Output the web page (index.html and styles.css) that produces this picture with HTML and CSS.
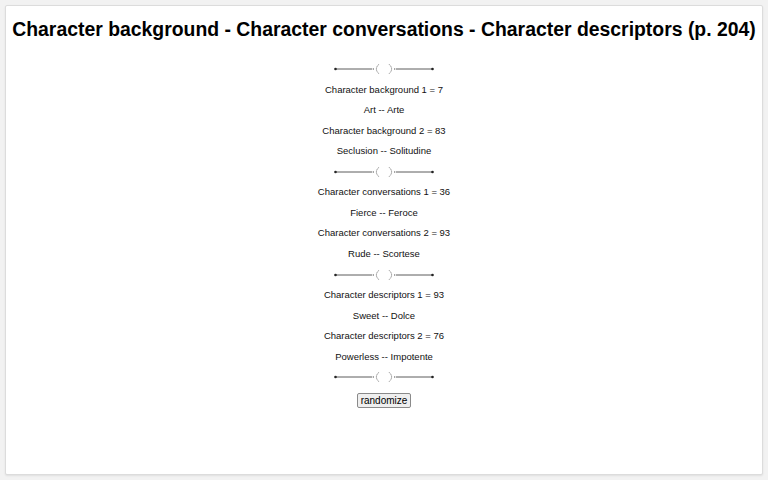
FILE: index.html
```html
<!DOCTYPE html>
<html>
<head>
<meta charset="utf-8">
<link rel="stylesheet" href="styles.css">
</head>
<body>
<div class="card">
  <h1 class="title">Character background - Character conversations - Character descriptors (p. 204)</h1>
  <div class="content">
    <div class="divider"><svg width="100" height="12" viewBox="0 0 100 12"><circle cx="1.5" cy="6" r="1.3" fill="#222"/><line x1="1.5" y1="6" x2="38" y2="6" stroke="#333" stroke-width="0.8"/><circle cx="39.3" cy="6" r="0.7" fill="#666"/><path d="M45 1.2 Q39.8 6 45 10.8" fill="none" stroke="#888" stroke-width="1" stroke-dasharray="1.4 0.6"/><path d="M55 1.2 Q60.2 6 55 10.8" fill="none" stroke="#888" stroke-width="1" stroke-dasharray="1.4 0.6"/><circle cx="60.7" cy="6" r="0.7" fill="#666"/><line x1="62" y1="6" x2="98.5" y2="6" stroke="#333" stroke-width="0.8"/><circle cx="98.5" cy="6" r="1.3" fill="#222"/></svg></div>
    <div class="line">Character background 1 = 7</div>
    <div class="line">Art -- Arte</div>
    <div class="line">Character background 2 = 83</div>
    <div class="line">Seclusion -- Solitudine</div>
    <div class="divider"><svg width="100" height="12" viewBox="0 0 100 12"><circle cx="1.5" cy="6" r="1.3" fill="#222"/><line x1="1.5" y1="6" x2="38" y2="6" stroke="#333" stroke-width="0.8"/><circle cx="39.3" cy="6" r="0.7" fill="#666"/><path d="M45 1.2 Q39.8 6 45 10.8" fill="none" stroke="#888" stroke-width="1" stroke-dasharray="1.4 0.6"/><path d="M55 1.2 Q60.2 6 55 10.8" fill="none" stroke="#888" stroke-width="1" stroke-dasharray="1.4 0.6"/><circle cx="60.7" cy="6" r="0.7" fill="#666"/><line x1="62" y1="6" x2="98.5" y2="6" stroke="#333" stroke-width="0.8"/><circle cx="98.5" cy="6" r="1.3" fill="#222"/></svg></div>
    <div class="line">Character conversations 1 = 36</div>
    <div class="line">Fierce -- Feroce</div>
    <div class="line">Character conversations 2 = 93</div>
    <div class="line">Rude -- Scortese</div>
    <div class="divider"><svg width="100" height="12" viewBox="0 0 100 12"><circle cx="1.5" cy="6" r="1.3" fill="#222"/><line x1="1.5" y1="6" x2="38" y2="6" stroke="#333" stroke-width="0.8"/><circle cx="39.3" cy="6" r="0.7" fill="#666"/><path d="M45 1.2 Q39.8 6 45 10.8" fill="none" stroke="#888" stroke-width="1" stroke-dasharray="1.4 0.6"/><path d="M55 1.2 Q60.2 6 55 10.8" fill="none" stroke="#888" stroke-width="1" stroke-dasharray="1.4 0.6"/><circle cx="60.7" cy="6" r="0.7" fill="#666"/><line x1="62" y1="6" x2="98.5" y2="6" stroke="#333" stroke-width="0.8"/><circle cx="98.5" cy="6" r="1.3" fill="#222"/></svg></div>
    <div class="line">Character descriptors 1 = 93</div>
    <div class="line">Sweet -- Dolce</div>
    <div class="line">Character descriptors 2 = 76</div>
    <div class="line">Powerless -- Impotente</div>
    <div class="divider"><svg width="100" height="12" viewBox="0 0 100 12"><circle cx="1.5" cy="6" r="1.3" fill="#222"/><line x1="1.5" y1="6" x2="38" y2="6" stroke="#333" stroke-width="0.8"/><circle cx="39.3" cy="6" r="0.7" fill="#666"/><path d="M45 1.2 Q39.8 6 45 10.8" fill="none" stroke="#888" stroke-width="1" stroke-dasharray="1.4 0.6"/><path d="M55 1.2 Q60.2 6 55 10.8" fill="none" stroke="#888" stroke-width="1" stroke-dasharray="1.4 0.6"/><circle cx="60.7" cy="6" r="0.7" fill="#666"/><line x1="62" y1="6" x2="98.5" y2="6" stroke="#333" stroke-width="0.8"/><circle cx="98.5" cy="6" r="1.3" fill="#222"/></svg></div>
    <div class="btn-row"><button class="btn">randomize</button></div>
  </div>
</div>
</body>
</html>
```
FILE: styles.css
```css
html, body {
  margin: 0;
  padding: 0;
  background: #f2f2f2;
  font-family: "Liberation Sans", Arial, sans-serif;
}
body {
  padding: 5px;
  box-sizing: border-box;
  height: 480px;
}
.card {
  background: #fff;
  border: 1px solid #dcdcdc;
  border-radius: 2px;
  box-shadow: 0 1px 2px rgba(0,0,0,0.08);
  height: 470px;
  box-sizing: border-box;
  display: flex;
  flex-direction: column;
  align-items: center;
}
.title {
  margin: 11px 0 0;
  font-size: 19.4px;
  font-weight: bold;
  color: #000;
  line-height: 24px;
  white-space: nowrap;
}
.content {
  margin-top: 18px;
  display: flex;
  flex-direction: column;
  align-items: center;
}
.divider {
  height: 20.55px;
  display: flex;
  align-items: center;
}
.divider svg { display: block; }
.line {
  font-size: 9.5px;
  line-height: 20.55px;
  color: #111;
}
.btn-row {
  margin-top: 2px;
}
.btn {
  font-family: "Liberation Sans", Arial, sans-serif;
  font-size: 10px;
  padding: 1px 3px;
  border: 1px solid #8a8a8a;
  border-radius: 2px;
  background: #efefef;
  color: #000;
}
```
